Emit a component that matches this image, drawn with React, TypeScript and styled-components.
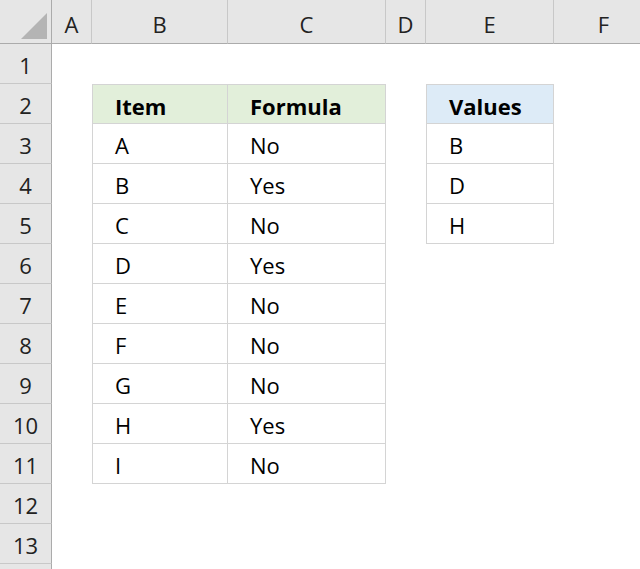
import React from "react";
import styled, { createGlobalStyle } from "styled-components";

const G = createGlobalStyle`
  body { margin: 0; background: #fff; overflow: hidden; font-family: "Open Sans", "Liberation Sans", sans-serif; }
`;

const Sheet = styled.div`
  display: grid;
  grid-template-columns: 52px 40px 136px 158px 40px 128px 100px;
  grid-template-rows: 44px repeat(14, 40px);
  width: 640px;
  height: 569px;
  overflow: hidden;
`;

const Corner = styled.div`
  background: #e6e6e6;
  border-right: 1px solid #ababab;
  border-bottom: 1px solid #ababab;
  position: relative;
  &::after {
    content: "";
    position: absolute;
    right: 4px;
    bottom: 4px;
    border-style: solid;
    border-width: 0 0 26px 26px;
    border-color: transparent transparent #b4b4b4 transparent;
  }
`;

const ColHead = styled.div`
  background: #e6e6e6;
  border-right: 1px solid #c8c8c8;
  border-bottom: 1px solid #ababab;
  display: flex;
  align-items: center;
  justify-content: center;
  font-size: 22px;
  color: #222;
  padding-top: 4px;
  box-sizing: border-box;
`;

const RowHead = styled.div`
  background: #e6e6e6;
  border-right: 1px solid #ababab;
  border-bottom: 1px solid #c8c8c8;
  display: flex;
  align-items: center;
  justify-content: center;
  font-size: 22px;
  color: #222;
  padding-top: 2px;
  box-sizing: border-box;
`;

const Cell = styled.div<{ $fill?: string; $bold?: boolean; $boxed?: boolean }>`
  background: ${(p) => p.$fill || "#fff"};
  box-sizing: border-box;
  display: flex;
  align-items: center;
  padding-left: 22px;
  padding-top: 3px;
  font-size: 22px;
  font-weight: ${(p) => (p.$bold ? 700 : 400)};
  color: #000;
  ${(p) => (p.$boxed ? "border-bottom: 1px solid #d4d4d4; border-right: 1px solid #d4d4d4;" : "")}
`;

const cols = ["A", "B", "C", "D", "E", "F"];
const items = ["A", "B", "C", "D", "E", "F", "G", "H", "I"];
const formula = ["No", "Yes", "No", "Yes", "No", "No", "No", "Yes", "No"];
const values = ["B", "D", "H"];

export default function App() {
  const cells: React.ReactNode[] = [<Corner key="c" />];
  cols.forEach((c) => cells.push(<ColHead key={c}>{c}</ColHead>));
  for (let r = 1; r <= 14; r++) {
    cells.push(<RowHead key={"r" + r}>{r <= 13 ? r : ""}</RowHead>);
    for (let ci = 0; ci < 6; ci++) {
      const k = r + "-" + ci;
      let text = "";
      let fill: string | undefined;
      let bold = false;
      let boxed = false;
      if ((ci === 1 || ci === 2) && r >= 2 && r <= 11) {
        boxed = true;
        if (r === 2) {
          fill = "#e2efda";
          bold = true;
          text = ci === 1 ? "Item" : "Formula";
        } else text = ci === 1 ? items[r - 3] : formula[r - 3];
      }
      if (ci === 4 && r >= 2 && r <= 5) {
        boxed = true;
        if (r === 2) {
          fill = "#ddebf7";
          bold = true;
          text = "Values";
        } else text = values[r - 3];
      }
      const leftEdge = boxed && (ci === 1 || ci === 4);
      const topEdge = boxed && r === 2;
      cells.push(
        <Cell
          key={k}
          $fill={fill}
          $bold={bold}
          $boxed={boxed}
          style={{
            borderLeft: leftEdge ? "1px solid #d4d4d4" : undefined,
            borderTop: topEdge ? "1px solid #d4d4d4" : undefined,
          }}
        >
          {text}
        </Cell>
      );
    }
  }
  return (
    <>
      <G />
      <Sheet>{cells}</Sheet>
    </>
  );
}
